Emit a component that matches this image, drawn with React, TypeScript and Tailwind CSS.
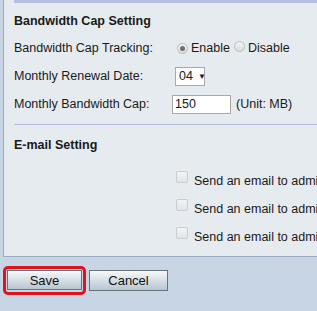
import React from "react";

const labelCls = "w-[158px] shrink-0";

function Radio({ checked }: { checked?: boolean }) {
  return (
    <span className="inline-flex h-[11px] w-[11px] items-center justify-center rounded-full border border-[#b9bcc0] bg-gradient-to-b from-[#f4f4f4] to-[#dcdcdc]">
      {checked && <span className="h-[5px] w-[5px] rounded-full bg-[#6f6f6f]" />}
    </span>
  );
}

function Checkbox() {
  return (
    <span className="inline-block h-[12px] w-[12px] rounded-[2px] border border-[#c9ccd0] bg-gradient-to-b from-[#f2f3f4] to-[#e2e4e6]" />
  );
}

function Row({ label, children }: { label: string; children: React.ReactNode }) {
  return (
    <div className="flex h-[28px] items-center">
      <span className={labelCls}>{label}</span>
      {children}
    </div>
  );
}

export default function App() {
  return (
    <div
      className="h-[311px] w-[317px] overflow-hidden bg-[#c7d5e4] pl-[3px] text-[12.5px] text-[#1a1a1a]"
      style={{ fontFamily: '"Liberation Sans", Arial, sans-serif' }}
    >
      {/* panel */}
      <div className="h-[257px] border-b border-l border-[#98abc1] bg-[#e6ebf0] pl-[10px]">
        <div className="h-[3px] bg-[#b7bee4]" />

        <div className="pt-[9px] font-bold">Bandwidth Cap Setting</div>

        <div className="mt-[4px]">
          <Row label="Bandwidth Cap Tracking:">
            <span className="ml-[5px] flex items-center">
              <Radio checked />
              <span className="ml-[3px]">Enable</span>
              <span className="ml-[4px]">
                <Radio />
              </span>
              <span className="ml-[3px]">Disable</span>
            </span>
          </Row>
          <Row label="Monthly Renewal Date:">
            <span className="ml-[3px] flex h-[19px] w-[30px] items-center border border-[#a9a9a9] bg-white pl-[3px]">
              04
              <span className="ml-[5px] text-[8px]">▼</span>
            </span>
          </Row>
          <Row label="Monthly Bandwidth Cap:">
            <span className="flex h-[19px] w-[59px] items-center border border-[#a9a9a9] bg-white pl-[2px]">
              150
            </span>
            <span className="ml-[5px]">(Unit: MB)</span>
          </Row>
        </div>

        <div className="mt-[5px] h-px bg-[#b3bbe0]" />

        <div className="pt-[11px] font-bold">E-mail Setting</div>

        <div className="mt-[13px] flex flex-col">
          {[0, 1, 2].map((i) => (
            <div key={i} className="flex h-[28px] items-center whitespace-nowrap pl-[162px]">
              <span className="-mt-[4px]">
                <Checkbox />
              </span>
              <span className="ml-[6px]">
                Send an email to administrator when the network traffic reaches
              </span>
            </div>
          ))}
        </div>
      </div>

      {/* buttons */}
      <div className="mt-[9px] flex items-center gap-[3px]">
        <div className="rounded-[5px] border-[3px] border-[#e0131a] p-[1px]">
          <button className="h-[20px] w-[75px] border border-[#6a737c] bg-gradient-to-b from-[#f7f9fa] to-[#b8c5d1] text-[13px] text-[#111]">
            Save
          </button>
        </div>
        <button className="h-[21px] w-[79px] border border-[#6a737c] bg-gradient-to-b from-[#f7f9fa] to-[#b8c5d1] text-[13px] text-[#111]">
          Cancel
        </button>
      </div>
    </div>
  );
}
